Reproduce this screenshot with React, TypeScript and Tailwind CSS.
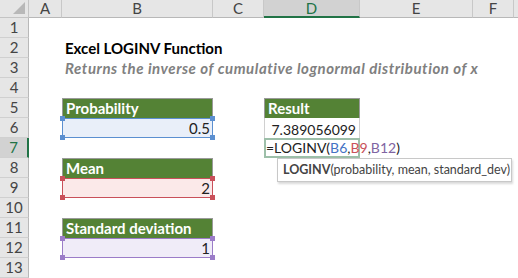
import React from 'react';

const cols = ['A', 'B', 'C', 'D', 'E', 'F'];
const rows = Array.from({ length: 13 }, (_, i) => i + 1);

function Handles({ color }: { color: string }) {
  return (
    <>
      <span className={`absolute -left-[3px] -top-[3px] w-[5px] h-[5px] ${color}`} />
      <span className={`absolute -right-[3px] -top-[3px] w-[5px] h-[5px] ${color}`} />
      <span className={`absolute -left-[3px] -bottom-[3px] w-[5px] h-[5px] ${color}`} />
      <span className={`absolute -right-[3px] -bottom-[3px] w-[5px] h-[5px] ${color}`} />
    </>
  );
}

function GreenHeader({ label, col, row }: { label: string; col: string; row: string }) {
  return (
    <div className={`${col} ${row} bg-[#548235] border-t border-x border-[#9a9a9a] text-white font-bold text-[15px] leading-none flex items-end pl-[3px] pb-[2px]`}>
      {label}
    </div>
  );
}

export default function App() {
  return (
    <div className="w-[518px] h-[278px] overflow-hidden bg-white relative font-['Lato',sans-serif] text-[#222]">
      <div className="grid grid-cols-[29px_33px_151px_51px_96px_113px_41px_4px] grid-rows-[18px_repeat(13,20px)]">
        {/* corner */}
        <div className="col-start-1 row-start-1 bg-[#e6e6e6] border-r border-b border-[#c4c4c4] relative">
          <svg className="absolute right-[3px] bottom-[3px]" width="12" height="12" viewBox="0 0 12 12">
            <polygon points="12,0 12,12 0,12" fill="#b8b8b8" />
          </svg>
        </div>
        {cols.map((c, i) => (
          <div
            key={c}
            className={`row-start-1 flex items-center justify-center text-[15px] leading-none border-r border-[#c8c8c8] ${
              c === 'D'
                ? 'bg-[#d2d2d2] text-[#217346] border-b-2 border-b-[#217346]'
                : 'bg-[#e6e6e6] text-[#444] border-b border-b-[#b8b8b8]'
            }`}
            style={{ gridColumnStart: i + 2 }}
          >
            {c}
          </div>
        ))}
        <div className="row-start-1 col-start-8 bg-[#e6e6e6] border-b border-[#b8b8b8]" />

        {rows.map((r) => (
          <div
            key={r}
            className={`col-start-1 flex items-center justify-center text-[15px] leading-none border-b border-[#d0d0d0] ${
              r === 7
                ? 'bg-[#d2d2d2] text-[#217346] border-r-2 border-r-[#217346]'
                : 'bg-[#e6e6e6] text-[#444] border-r border-r-[#b8b8b8]'
            }`}
            style={{ gridRowStart: r + 1 }}
          >
            {r}
          </div>
        ))}

        {/* title */}
        <div className="col-start-3 col-span-5 row-start-3 flex items-end pl-[3px] pb-[2px] font-bold text-[15px] leading-none text-black whitespace-nowrap">
          Excel LOGINV Function
        </div>
        <div className="col-start-3 col-span-5 row-start-4 flex items-end pl-[3px] pb-[2px] font-bold italic text-[15px] tracking-[0.55px] leading-none text-[#808080] whitespace-nowrap">
          Returns the inverse of cumulative lognormal distribution of x
        </div>

        {/* probability */}
        <GreenHeader label="Probability" col="col-start-3" row="row-start-6" />
        <div className="col-start-3 row-start-7 relative bg-[#e9eff9] border border-[#5b8fd0] flex items-end justify-end pr-[2px] pb-[1px] text-[15px] leading-none">
          0.5
          <Handles color="bg-[#5b8fd0]" />
        </div>

        {/* mean */}
        <GreenHeader label="Mean" col="col-start-3" row="row-start-9" />
        <div className="col-start-3 row-start-10 relative bg-[#fbe9e9] border border-[#c9505a] flex items-end justify-end pr-[2px] pb-[1px] text-[15px] leading-none">
          2
          <Handles color="bg-[#c9505a]" />
        </div>

        {/* standard deviation */}
        <GreenHeader label="Standard deviation" col="col-start-3" row="row-start-12" />
        <div className="col-start-3 row-start-13 relative bg-[#f0ecf8] border border-[#9b7cc8] flex items-end justify-end pr-[2px] pb-[1px] text-[15px] leading-none">
          1
          <Handles color="bg-[#9b7cc8]" />
        </div>

        {/* result */}
        <GreenHeader label="Result" col="col-start-5" row="row-start-6" />
        <div className="col-start-5 row-start-7 flex items-end justify-end pr-[3px] pb-[1px] text-[14px] leading-none border-x border-[#d0d0d0]">
          7.389056099
        </div>
        <div className="col-start-5 row-start-8 relative border-2 border-[#9dbfa9]">
          <div className="absolute left-0 bottom-[1px] whitespace-nowrap text-[14px] leading-none text-[#222]">
            =LOGINV(<span className="text-[#4472c4]">B6</span>,<span className="text-[#c9505a]">B9</span>,
            <span className="text-[#8064a2]">B12</span>)
          </div>
        </div>
      </div>

      {/* function tooltip */}
      <div className="absolute left-[277px] top-[158px] w-[235px] h-[24px] bg-white border border-[#c8c8c8] shadow-[1px_2px_2px_rgba(0,0,0,0.15)] flex items-center pl-[5px] text-[12.5px] text-[#444] whitespace-nowrap font-['Lato',sans-serif]">
        <span className="font-bold text-[#444]">LOGINV</span>(probability, mean, standard_dev)
      </div>
    </div>
  );
}
